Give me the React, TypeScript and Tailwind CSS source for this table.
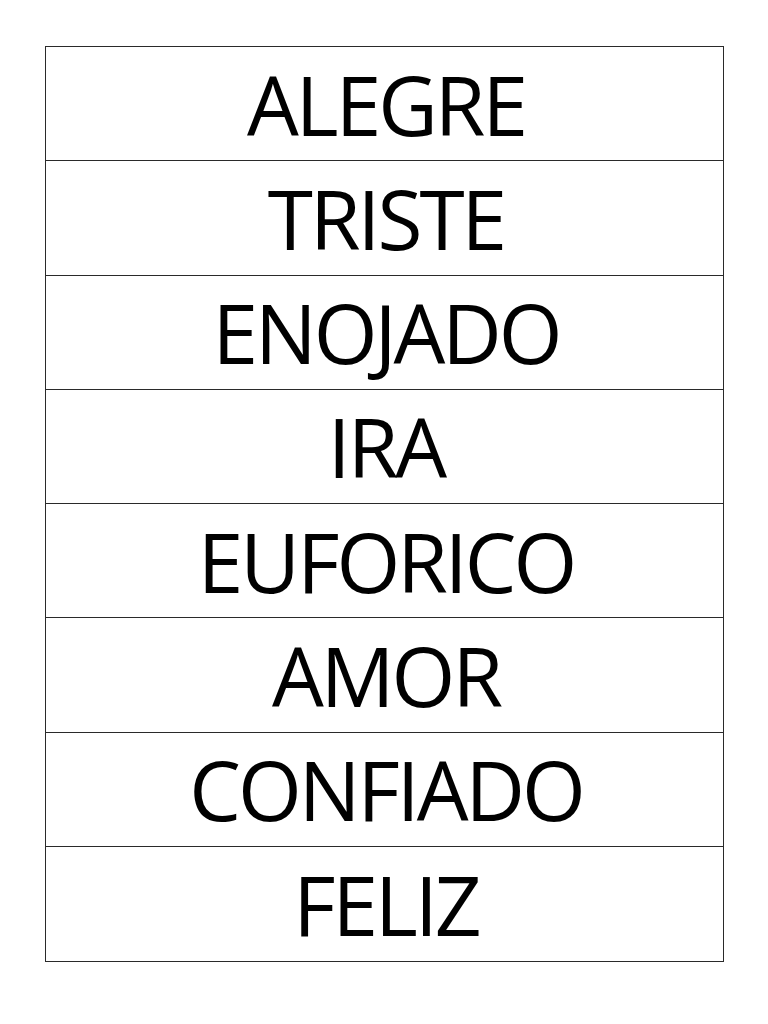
import React from 'react';

const words = ['ALEGRE', 'TRISTE', 'ENOJADO', 'IRA', 'EUFORICO', 'AMOR', 'CONFIADO', 'FELIZ'];

export default function App() {
  return (
    <div className="w-[768px] h-[1024px] bg-white pt-[46px] pl-[45px]">
      <div className="w-[679px] h-[916px] border border-[#2a2a2a] grid grid-rows-8 divide-y divide-[#2a2a2a]">
        {words.map((w) => (
          <div
            key={w}
            className="flex items-center justify-center text-black text-[82px] font-medium leading-none tracking-[-3px]"
            style={{ fontFamily: '"Open Sans", sans-serif' }}
          >
            <span className="mr-[-3px]">{w}</span>
          </div>
        ))}
      </div>
    </div>
  );
}
